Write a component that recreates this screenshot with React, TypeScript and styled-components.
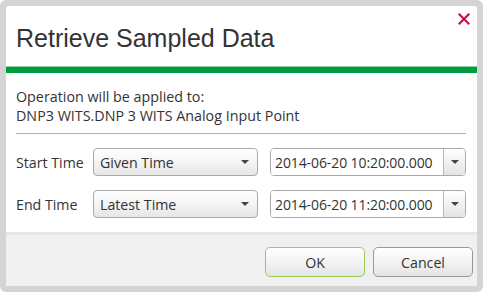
import React from "react";
import styled, { createGlobalStyle } from "styled-components";

const Global = createGlobalStyle`
  html, body { margin: 0; padding: 0; background: #ffffff; }
  body { font-family: "Open Sans", "Noto Sans", sans-serif; }
  * { box-sizing: border-box; }
`;

const Frame = styled.div`
  width: 483px;
  height: 292px;
  background: #d4d4d4;
  border-radius: 6px;
  padding: 6px 6px 6px 6px;
`;

const Panel = styled.div`
  width: 471px;
  height: 280px;
  background: #ffffff;
  border-radius: 2px;
  display: flex;
  flex-direction: column;
  overflow: hidden;
`;

const Header = styled.div`
  position: relative;
  height: 62px;
  padding: 17px 0 0 10px;
`;

const Title = styled.h1`
  margin: 0;
  font-family: "Liberation Sans", Arial, sans-serif;
  font-weight: normal;
  font-size: 25px;
  line-height: 30px;
  color: #333333;
`;

const Close = styled.button`
  position: absolute;
  top: 6px;
  right: 6px;
  width: 14px;
  height: 14px;
  padding: 0;
  border: none;
  background: transparent;
  display: flex;
  align-items: center;
  justify-content: center;
`;

const Accent = styled.div`
  height: 8px;
  background: #009a3f;
  border-top: 1px solid #8fd2a6;
`;

const Body = styled.div`
  flex: 1;
  padding: 14px 11px 0 10px;
`;

const Info = styled.div`
  font-size: 14.3px;
  line-height: 19px;
  color: #333333;
  white-space: nowrap;
`;

const Separator = styled.div`
  height: 1px;
  background: #b0b0b0;
  margin: 8px 0 14px 0;
`;

const Row = styled.div`
  display: flex;
  align-items: center;
  height: 28px;
  margin-bottom: 14px;
`;

const Label = styled.div`
  width: 77px;
  font-size: 14.2px;
  color: #333333;
`;

const Select = styled.div`
  width: 165px;
  height: 28px;
  border: 1px solid #a9a9a9;
  border-radius: 4px;
  background: linear-gradient(#ffffff, #f4f4f4 50%, #e6e6e6);
  display: flex;
  align-items: center;
  justify-content: space-between;
  padding: 0 8px 0 6px;
  font-size: 14.2px;
  color: #333333;
`;

const Arrow = styled.span`
  width: 0;
  height: 0;
  border-left: 4px solid transparent;
  border-right: 4px solid transparent;
  border-top: 4px solid #444444;
`;

const DateBox = styled.div`
  margin-left: 12px;
  width: 196px;
  height: 28px;
  border: 1px solid #a9a9a9;
  border-radius: 4px;
  display: flex;
  overflow: hidden;
`;

const DateText = styled.div`
  flex: 1;
  display: flex;
  align-items: center;
  padding-left: 4px;
  font-size: 14px;
  letter-spacing: -0.1px;
  color: #333333;
  background: #ffffff;
  white-space: nowrap;
  overflow: hidden;
`;

const DateButton = styled.div`
  width: 22px;
  flex: none;
  border-left: 1px solid #b8b8b8;
  background: linear-gradient(#ffffff, #f2f2f2 50%, #e4e4e4);
  display: flex;
  align-items: center;
  justify-content: center;
`;

const Footer = styled.div`
  height: 56px;
  background: #f0f0f0;
  border-top: 3px solid #e6e6e6;
  display: flex;
  justify-content: flex-end;
  align-items: flex-start;
  gap: 8px;
  padding: 12px 4px 0 0;
`;

const Button = styled.button<{ $primary?: boolean }>`
  width: 100px;
  height: 30px;
  border-radius: 5px;
  border: 1px solid ${(p) => (p.$primary ? "#9ccc55" : "#9a9a9a")};
  background: linear-gradient(#ffffff, #f3f3f3 50%, #e4e4e4);
  font-family: "Open Sans", "Noto Sans", sans-serif;
  font-size: 14.2px;
  color: #333333;
  padding: 0;
`;

export default function App() {
  return (
    <>
      <Global />
      <Frame>
        <Panel>
          <Header>
            <Title>Retrieve Sampled Data</Title>
            <Close aria-label="Close">
              <svg width="12" height="12" viewBox="0 0 12 12">
                <path d="M1.5 1.5 L10.5 10.5 M10.5 1.5 L1.5 10.5" stroke="#c8104e" strokeWidth="2.2" strokeLinecap="square" />
              </svg>
            </Close>
          </Header>
          <Accent />
          <Body>
            <Info>Operation will be applied to:</Info>
            <Info>DNP3 WITS.DNP 3 WITS Analog Input Point</Info>
            <Separator />
            <Row>
              <Label>Start Time</Label>
              <Select>
                <span>Given Time</span>
                <Arrow />
              </Select>
              <DateBox>
                <DateText>2014-06-20 10:20:00.000</DateText>
                <DateButton>
                  <Arrow />
                </DateButton>
              </DateBox>
            </Row>
            <Row>
              <Label>End Time</Label>
              <Select>
                <span>Latest Time</span>
                <Arrow />
              </Select>
              <DateBox>
                <DateText>2014-06-20 11:20:00.000</DateText>
                <DateButton>
                  <Arrow />
                </DateButton>
              </DateBox>
            </Row>
          </Body>
          <Footer>
            <Button $primary>OK</Button>
            <Button>Cancel</Button>
          </Footer>
        </Panel>
      </Frame>
    </>
  );
}
